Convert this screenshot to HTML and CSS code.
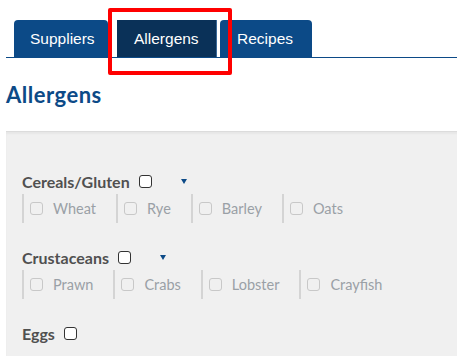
FILE: index.html
```html
<!DOCTYPE html>
<html lang="en">
<head>
    <meta charset="UTF-8">
    <meta name="viewport" content="width=device-width, initial-scale=1.0">
    <title>Allergens</title>
    <link rel="stylesheet" href="styles.css">
</head>
<body>
    <div class="page">
        <nav class="tabs">
            <a class="tab tab-suppliers">Suppliers</a>
            <a class="tab tab-active">Allergens</a>
            <a class="tab tab-recipes">Recipes</a>
            <div class="highlight-box"></div>
        </nav>

        <h1 class="title">Allergens</h1>

        <div class="panel">
            <div class="group">
                <div class="group-head">
                    <span class="group-name">Cereals/Gluten</span>
                    <input type="checkbox" class="check">
                    <span class="caret"></span>
                </div>
                <div class="sub-row">
                    <label class="sub"><input type="checkbox" class="check check-off" disabled>Wheat</label>
                    <label class="sub"><input type="checkbox" class="check check-off" disabled>Rye</label>
                    <label class="sub"><input type="checkbox" class="check check-off" disabled>Barley</label>
                    <label class="sub"><input type="checkbox" class="check check-off" disabled>Oats</label>
                </div>
            </div>

            <div class="group">
                <div class="group-head">
                    <span class="group-name">Crustaceans</span>
                    <input type="checkbox" class="check">
                    <span class="caret"></span>
                </div>
                <div class="sub-row">
                    <label class="sub"><input type="checkbox" class="check check-off" disabled>Prawn</label>
                    <label class="sub"><input type="checkbox" class="check check-off" disabled>Crabs</label>
                    <label class="sub"><input type="checkbox" class="check check-off" disabled>Lobster</label>
                    <label class="sub"><input type="checkbox" class="check check-off" disabled>Crayfish</label>
                </div>
            </div>

            <div class="group">
                <div class="group-head">
                    <span class="group-name">Eggs</span>
                    <input type="checkbox" class="check">
                </div>
            </div>
        </div>
    </div>
</body>
</html>
```

FILE: styles.css
```css
html, body {
    margin: 0;
    padding: 0;
    background-color: #ffffff;
    overflow: hidden;
}
.page {
    padding: 0 0 0 6px;
    font-family: Lato, "Open Sans", sans-serif;
}
.tabs {
    position: relative;
    display: flex;
    align-items: flex-end;
    padding: 20px 0 0 8px;
    border-bottom: 1px solid #0c4a87;
}
.tab {
    display: block;
    height: 37px;
    line-height: 37px;
    padding: 0 15px;
    font-family: "Liberation Sans", Arial, sans-serif;
    font-size: 15.5px;
    color: #ffffff;
    background-color: #0c4a87;
    border-radius: 4px 4px 0 0;
    cursor: pointer;
}
.tab-suppliers {
    width: 64px;
    padding: 0 14px 0 16px;
}
.tab-active {
    margin-left: 9px;
    width: 68px;
    padding: 0 14px 0 17px;
    background-color: #0a3158;
    border-right: 1px solid #3a6a9a;
    border-radius: 0;
}
.tab-recipes {
    margin-left: 3px;
    width: 61px;
    padding: 0 14px 0 17px;
}
.highlight-box {
    position: absolute;
    left: 102px;
    top: 8px;
    width: 116px;
    height: 59px;
    border: 4px solid #ff0000;
    border-radius: 2px;
}
.title {
    margin: 24px 0 0 0;
    font-size: 22px;
    font-weight: bold;
    letter-spacing: 0.5px;
    color: #0c4a87;
    line-height: 26px;
}
.panel {
    margin-top: 23px;
    margin-right: -20px;
    padding: 39px 16px 20px 16px;
    background-color: #f0f0f0;
    border-top: 1px solid #dcdcdc;
    box-shadow: inset 0 2px 2px rgba(0, 0, 0, 0.04);
    min-height: 200px;
}
.group {
    margin-bottom: 24px;
}
.group-head {
    display: flex;
    align-items: center;
    height: 20px;
}
.group-name {
    font-size: 16px;
    font-weight: bold;
    color: #505050;
}
.check {
    appearance: none;
    -webkit-appearance: none;
    width: 13px;
    height: 13px;
    margin: 0 0 0 9px;
    border: 1px solid #333333;
    border-radius: 3px;
    background-color: #ffffff;
    box-sizing: border-box;
}
.caret {
    margin-left: 29px;
    width: 0;
    height: 0;
    border-left: 3px solid transparent;
    border-right: 3px solid transparent;
    border-top: 5px solid #0c4a87;
}
.sub-row {
    display: flex;
    margin-top: 3px;
}
.sub {
    display: flex;
    align-items: center;
    height: 29px;
    padding: 0 20px 0 6px;
    border-left: 2px solid #d4d4d4;
    font-size: 14.5px;
    color: #9aa0a6;
}
.check-off {
    margin: 0 10px 0 0;
    border-color: #c8c8c8;
    background-color: #f0f0f0;
}
```
